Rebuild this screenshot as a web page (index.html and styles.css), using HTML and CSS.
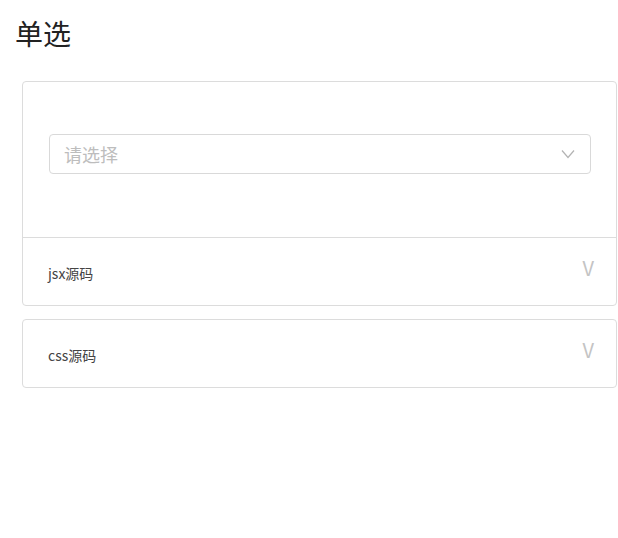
FILE: index.html
```html
<!DOCTYPE html>
<html lang="zh-CN">

<head>
    <meta charset="UTF-8">
    <meta name="viewport" content="width=device-width, initial-scale=1.0">
    <title>单选</title>
    <link rel="stylesheet" href="styles.css">
</head>

<body>
    <h1 class="page-title">单选</h1>

    <!-- Demo card -->
    <div class="card">
        <div class="demo">
            <div class="select">
                <span class="select-placeholder">请选择</span>
                <svg class="select-arrow" width="14" height="10" viewBox="0 0 14 10">
                    <polyline points="1,1.5 7,8.5 13,1.5" fill="none" stroke="#b3b3b3" stroke-width="1.2" />
                </svg>
            </div>
        </div>
        <div class="code-header">
            <span class="code-label">jsx源码</span>
            <span class="code-toggle">V</span>
        </div>
    </div>

    <div class="card">
        <div class="code-header">
            <span class="code-label">css源码</span>
            <span class="code-toggle">V</span>
        </div>
    </div>
</body>

</html>
```

FILE: styles.css
```css
* {
    box-sizing: border-box;
    margin: 0;
    padding: 0;
}

body {
    font-family: 'Noto Sans CJK SC', 'Noto Sans', sans-serif;
    background-color: #fff;
    color: #333;
}

.page-title {
    font-size: 28px;
    font-weight: 400;
    line-height: 42px;
    color: #222;
    padding: 12px 15px 27px;
}

.card {
    margin: 0 1px 13px 22px;
    border: 1px solid #dcdcdc;
    border-radius: 4px;
}

.demo {
    padding: 52px 25px 63px 26px;
    border-bottom: 1px solid #dcdcdc;
}

.select {
    display: flex;
    align-items: center;
    justify-content: space-between;
    height: 40px;
    padding: 0 15px 0 14px;
    border: 1px solid #d9d9d9;
    border-radius: 4px;
}

.select-placeholder {
    font-size: 18px;
    color: #bdbdbd;
}

.code-header {
    display: flex;
    justify-content: space-between;
    align-items: flex-start;
    padding: 20px 22px 21px 25px;
}

.code-label {
    margin-top: 4px;
    font-size: 14px;
    line-height: 22px;
    color: #444;
}

.code-toggle {
    font-size: 20px;
    line-height: 20px;
    font-weight: 400;
    color: #c4c4c4;
    cursor: pointer;
}
```
